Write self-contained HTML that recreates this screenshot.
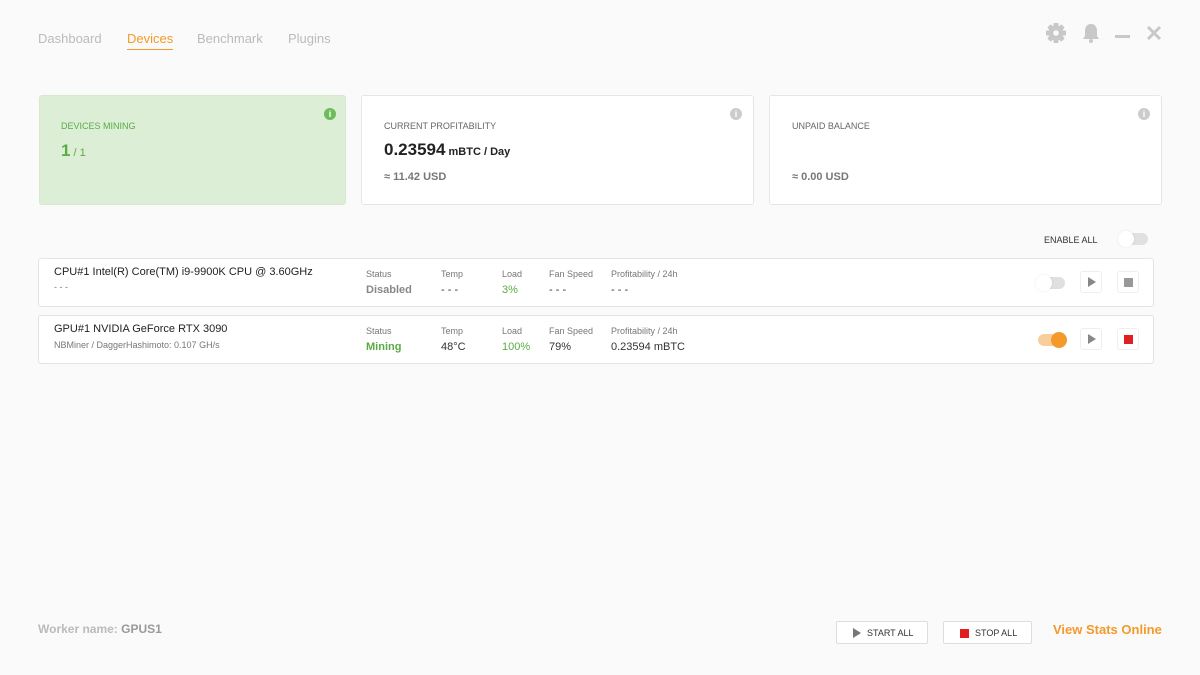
<!DOCTYPE html>
<html><head><meta charset="utf-8"><style>
*{margin:0;padding:0;box-sizing:border-box}
body{width:1200px;height:675px;background:#fafafa;font-family:"Liberation Sans",sans-serif;position:relative;overflow:hidden;color:#222}
.a{position:absolute;white-space:nowrap}
.card{position:absolute;top:95px;height:110px;border:1px solid #e6e6e6;background:#fff;border-radius:3px}
.lbl{font-size:9px;color:#666}
.info{position:absolute;width:12px;height:12px;border-radius:50%;background:#ccc;color:#fff;font-size:9px;text-align:center;line-height:12px;font-weight:bold}
.row{position:absolute;left:38px;width:1116px;height:49px;border:1px solid #e4e4e4;background:#fff;border-radius:3px}
.h{font-size:9px;color:#777}
.v{font-size:11px;color:#333}
.btn{position:absolute;width:22px;height:22px;border:1px solid #eee;border-radius:3px;background:#fff}
.knob{position:absolute;width:16px;height:16px;border-radius:50%;background:#fff;box-shadow:0 0 3px rgba(0,0,0,.08)}
</style></head><body>
<div class="a" style="left:38px;top:31px;font-size:13px;color:#bbb">Dashboard</div>
<div class="a" style="left:127px;top:31px;font-size:13px;color:#f39a2b;border-bottom:1px solid #f39a2b;padding-bottom:3px">Devices</div>
<div class="a" style="left:197px;top:31px;font-size:13px;color:#bbb">Benchmark</div>
<div class="a" style="left:288px;top:31px;font-size:13px;color:#bbb">Plugins</div>
<svg class="a" style="left:1045px;top:22px" width="22" height="22" viewBox="0 0 22 22"><g fill="#c8c8c8"><rect x="8.5" y="1" width="5" height="20" rx="1"/><rect x="8.5" y="1" width="5" height="20" rx="1" transform="rotate(45 11 11)"/><rect x="8.5" y="1" width="5" height="20" rx="1" transform="rotate(90 11 11)"/><rect x="8.5" y="1" width="5" height="20" rx="1" transform="rotate(135 11 11)"/><circle cx="11" cy="11" r="7.5"/></g><circle cx="11" cy="11" r="2.8" fill="#fafafa"/></svg>
<svg class="a" style="left:1081px;top:22px" width="20" height="22" viewBox="0 0 20 22"><path d="M10 2c-4 0-6 3-6 7v5l-2 3h16l-2-3V9c0-4-2-7-6-7z" fill="#c8c8c8"/><circle cx="10" cy="19" r="2" fill="#c8c8c8"/></svg>
<div class="a" style="left:1115px;top:35px;width:15px;height:3px;background:#c8c8c8"></div>
<svg class="a" style="left:1146px;top:25px" width="16" height="16"><path d="M2 2L14 14M14 2L2 14" stroke="#c8c8c8" stroke-width="3"/></svg>

<div class="card" style="left:39px;width:307px;background:#dcefd6;border-color:#d6e8cf">
<div class="info" style="left:284px;top:12px;background:#6dbb5a">i</div>
<div class="a lbl" style="left:21px;top:25px;color:#5aab45">DEVICES MINING</div>
<div class="a" style="left:21px;top:45px;font-size:17px;font-weight:bold;color:#5aab45">1<span style="font-size:11px;font-weight:normal"> / 1</span></div></div>
<div class="card" style="left:361px;width:393px">
<div class="info" style="left:368px;top:12px">i</div>
<div class="a lbl" style="left:22px;top:25px">CURRENT PROFITABILITY</div>
<div class="a" style="left:22px;top:44px;font-size:17px;font-weight:bold;color:#222">0.23594<span style="font-size:11px"> mBTC / Day</span></div>
<div class="a" style="left:22px;top:75px;font-size:11px;color:#777;font-weight:bold">≈ 11.42 USD</div></div>
<div class="card" style="left:769px;width:393px">
<div class="info" style="left:368px;top:12px">i</div>
<div class="a lbl" style="left:22px;top:25px">UNPAID BALANCE</div>
<div class="a" style="left:22px;top:75px;font-size:11px;color:#777;font-weight:bold">≈ 0.00 USD</div></div>

<div class="a" style="left:1044px;top:235px;font-size:9px;color:#333">ENABLE ALL</div>
<div class="a" style="left:1123px;top:233px;width:25px;height:12px;border-radius:6px;background:#e0e0e0"></div><div class="knob" style="left:1118px;top:231px"></div>

<div class="row" style="top:258px">
<div class="a" style="left:15px;top:7px;font-size:11px">CPU#1 Intel(R) Core(TM) i9-9900K CPU @ 3.60GHz</div>
<div class="a h" style="left:15px;top:23px">- - -</div>
<div class="a h" style="left:327px;top:10px">Status</div><div class="a v" style="left:327px;top:25px;font-weight:bold;color:#888">Disabled</div>
<div class="a h" style="left:402px;top:10px">Temp</div><div class="a v" style="left:402px;top:25px">- - -</div>
<div class="a h" style="left:463px;top:10px">Load</div><div class="a v" style="left:463px;top:25px;color:#5aab45">3%</div>
<div class="a h" style="left:510px;top:10px">Fan Speed</div><div class="a v" style="left:510px;top:25px">- - -</div>
<div class="a h" style="left:572px;top:10px">Profitability / 24h</div><div class="a v" style="left:572px;top:25px">- - -</div>
<div class="a" style="left:1002px;top:18px;width:24px;height:12px;border-radius:6px;background:#e0e0e0"></div><div class="knob" style="left:997px;top:16px"></div>
<div class="btn" style="left:1041px;top:12px"><svg width="20" height="20"><path d="M7 5L15 10L7 15Z" fill="#888"/></svg></div>
<div class="btn" style="left:1078px;top:12px"><div class="a" style="left:6px;top:6px;width:9px;height:9px;background:#999"></div></div>
</div>
<div class="row" style="top:315px">
<div class="a" style="left:15px;top:7px;font-size:11px">GPU#1 NVIDIA GeForce RTX 3090</div>
<div class="a h" style="left:15px;top:24px">NBMiner / DaggerHashimoto: 0.107 GH/s</div>
<div class="a h" style="left:327px;top:10px">Status</div><div class="a v" style="left:327px;top:25px;font-weight:bold;color:#5aab45">Mining</div>
<div class="a h" style="left:402px;top:10px">Temp</div><div class="a v" style="left:402px;top:25px">48°C</div>
<div class="a h" style="left:463px;top:10px">Load</div><div class="a v" style="left:463px;top:25px;color:#5aab45">100%</div>
<div class="a h" style="left:510px;top:10px">Fan Speed</div><div class="a v" style="left:510px;top:25px">79%</div>
<div class="a h" style="left:572px;top:10px">Profitability / 24h</div><div class="a v" style="left:572px;top:25px">0.23594 mBTC</div>
<div class="a" style="left:999px;top:18px;width:26px;height:12px;border-radius:6px;background:#f8cf9c"></div><div class="a" style="left:1012px;top:16px;width:16px;height:16px;border-radius:50%;background:#f39a2b"></div>
<div class="btn" style="left:1041px;top:12px"><svg width="20" height="20"><path d="M7 5L15 10L7 15Z" fill="#888"/></svg></div>
<div class="btn" style="left:1078px;top:12px"><div class="a" style="left:6px;top:6px;width:9px;height:9px;background:#e02020"></div></div>
</div>

<div class="a" style="left:38px;top:622px;font-size:12px;color:#bbb;font-weight:bold">Worker name: <span style="color:#999">GPUS1</span></div>
<div class="a" style="left:836px;top:621px;width:92px;height:23px;border:1px solid #ddd;background:#fff;border-radius:2px;font-size:9px;color:#333;padding:6px 0 0 15px"><span style="position:absolute;left:16px;top:6px;width:0;height:0;border-left:8px solid #777;border-top:5px solid transparent;border-bottom:5px solid transparent"></span><span style="margin-left:15px">START ALL</span></div>
<div class="a" style="left:943px;top:621px;width:89px;height:23px;border:1px solid #ddd;background:#fff;border-radius:2px;font-size:9px;color:#333;padding-top:6px"><span style="position:absolute;left:16px;top:7px;width:9px;height:9px;background:#e02020"></span><span style="margin-left:31px">STOP ALL</span></div>
<div class="a" style="left:1053px;top:622px;font-size:13px;font-weight:bold;color:#f39a2b">View Stats Online</div>
</body></html>
